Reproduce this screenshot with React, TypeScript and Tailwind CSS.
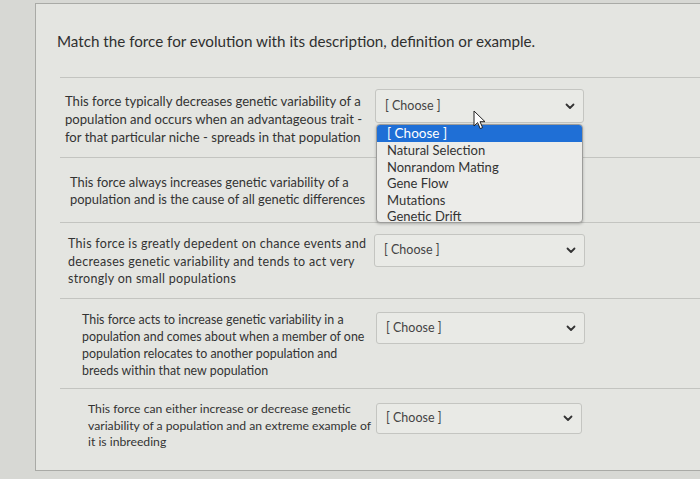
import React from "react";

function Chevron() {
  return (
    <svg width="10" height="7" viewBox="0 0 10 7" className="shrink-0">
      <path d="M1.5 1.5 L5 5 L8.5 1.5" fill="none" stroke="#333" strokeWidth="1.8" strokeLinecap="round" strokeLinejoin="round" />
    </svg>
  );
}

function Select({ cls }: { cls: string }) {
  return (
    <div className={"flex items-center justify-between border border-[#c4c5c1] rounded-[3px] bg-[#e9eae6] pl-[9px] pr-[8px] " + cls}>
      <span className="text-[12.5px] text-[#444]">[ Choose ]</span>
      <Chevron />
    </div>
  );
}

function Cursor() {
  return (
    <svg width="14" height="20" viewBox="0 0 14 20" className="absolute left-[473px] top-[110px]">
      <path d="M1 1 L1 16 L4.6 12.6 L7.2 18.6 L9.6 17.6 L7 11.7 L12 11.7 Z" fill="#fff" stroke="#222" strokeWidth="1" strokeLinejoin="round" />
    </svg>
  );
}

export default function App() {
  return (
    <div className="relative w-[700px] h-[479px] overflow-hidden bg-[#d7d8d4] pt-[3px] pl-[35px]" style={{ fontFamily: "Lato, 'Open Sans', sans-serif" }}>
      <div className="h-[468px] border-l border-t border-b border-[#a9aaa6] bg-[#e4e5e1] text-[#333]">
        <div className="h-[73px] pl-[21px] pt-[26px] text-[15.2px] text-[#2f2f2f]">
          Match the force for evolution with its description, definition or example.
        </div>
        <div className="ml-[24px] border-t border-[#c3c4c0]" />

        {/* Row 1 */}
        <div className="ml-[24px] h-[80px] border-b border-[#c3c4c0] flex">
          <div className="w-[315px] pl-[5px] pt-[14px] text-[13.1px] leading-[18px]">
            This force typically decreases genetic variability of a<br />
            population and occurs when an advantageous trait -<br />
            for that particular niche - spreads in that population
          </div>
          <div className="pt-[11px]">
            <Select cls="w-[209px] h-[34px]" />
          </div>
        </div>

        {/* Row 2 */}
        <div className="ml-[24px] h-[65px] border-b border-[#c3c4c0] flex">
          <div className="w-[315px] pl-[10px] pt-[16px] text-[12.9px] leading-[17px]">
            This force always increases genetic variability of a<br />
            population and is the cause of all genetic differences
          </div>
        </div>

        {/* Row 3 */}
        <div className="ml-[24px] h-[76px] border-b border-[#c3c4c0] flex">
          <div className="w-[314px] pl-[8px] pt-[12px] text-[12.5px] tracking-[0.3px] leading-[17.5px]">
            This force is greatly depedent on chance events and<br />
            decreases genetic variability and tends to act very<br />
            strongly on small populations
          </div>
          <div className="pt-[11px]">
            <Select cls="w-[211px] h-[33px]" />
          </div>
        </div>

        {/* Row 4 */}
        <div className="ml-[24px] h-[90px] border-b border-[#c3c4c0] flex">
          <div className="w-[316px] pl-[22px] pt-[12px] text-[12.4px] leading-[17px]">
            This force acts to increase genetic variability in a<br />
            population and comes about when a member of one<br />
            population relocates to another population and<br />
            breeds within that new population
          </div>
          <div className="pt-[13px]">
            <Select cls="w-[209px] h-[32px]" />
          </div>
        </div>

        {/* Row 5 */}
        <div className="ml-[24px] flex">
          <div className="w-[316px] pl-[28px] pt-[12px] text-[12.2px] leading-[16.5px]">
            This force can either increase or decrease genetic<br />
            variability of a population and an extreme example of<br />
            it is inbreeding
          </div>
          <div className="pt-[14px]">
            <Select cls="w-[206px] h-[31px]" />
          </div>
        </div>
      </div>

      {/* Open dropdown list */}
      <div className="absolute left-[376px] top-[124px] w-[207px] h-[99px] bg-[#ecece9] border border-[#9c9c9a] rounded-[4px] shadow-[0_1px_3px_rgba(0,0,0,0.25)] overflow-hidden text-[13px] leading-[16.6px] text-[#333]">
        <div className="bg-[#1f6fd6] text-white pl-[10px] h-[17px] text-[13.5px]">[ Choose ]</div>
        <div className="pl-[10px]">Natural Selection</div>
        <div className="pl-[10px]">Nonrandom Mating</div>
        <div className="pl-[10px]">Gene Flow</div>
        <div className="pl-[10px]">Mutations</div>
        <div className="pl-[10px]">Genetic Drift</div>
      </div>

      <Cursor />
    </div>
  );
}
